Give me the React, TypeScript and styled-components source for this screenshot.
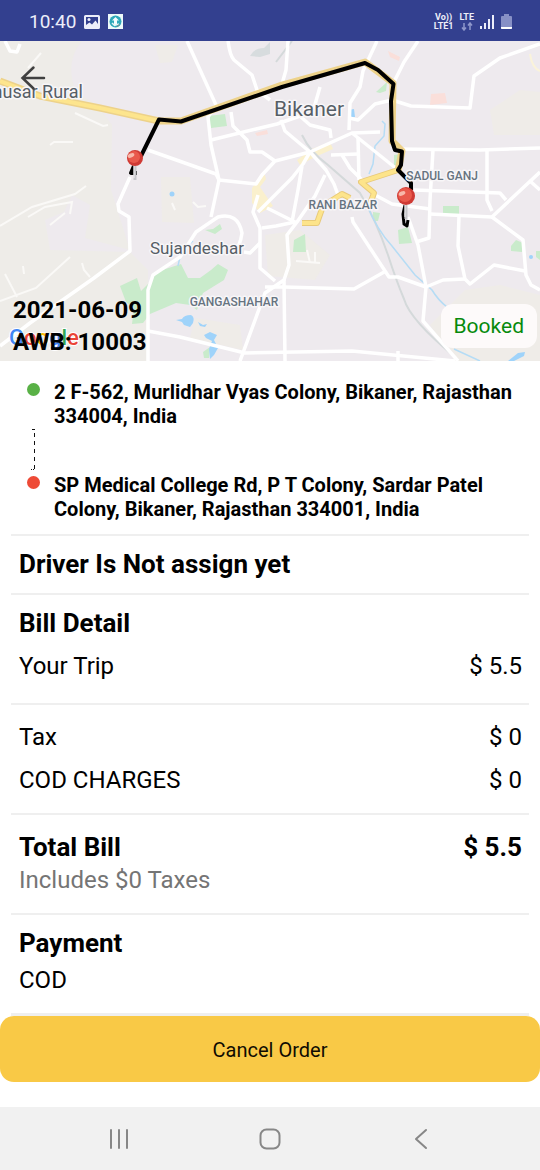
import React from "react";
import styled, { createGlobalStyle } from "styled-components";

const GlobalStyle = createGlobalStyle`
  *, *::before, *::after { box-sizing: border-box; }
  body {
    margin: 0;
    background: #fff;
    color: #000;
    font-family: Roboto, "Liberation Sans", sans-serif;
  }
  h1, h2, p, dl, dt, dd, ol { margin: 0; padding: 0; }
`;

const Screen = styled.div`
  display: flex;
  flex-direction: column;
  min-height: 100vh;
`;

const StatusBar = styled.header`
  display: flex;
  align-items: center;
  justify-content: space-between;
  height: 41px;
  padding: 2px 28px 0 29px;
  background: #33408f;
  color: #eceefa;
`;

const StatusGroup = styled.div<{ $gap: number }>`
  display: flex;
  align-items: center;
  gap: ${(p) => p.$gap}px;
`;

const Clock = styled.time`
  font-size: 19px;
  line-height: 24px;
`;

const NetworkLabel = styled.span`
  display: flex;
  flex-direction: column;
  align-items: center;
  font-size: 9px;
  font-weight: 700;
  line-height: 9px;
`;

const MapArea = styled.section`
  position: relative;
  height: 320px;
  overflow: hidden;
  background: #eeeaee;
`;

const MapCanvas = styled.svg`
  display: block;
  width: 100%;
  height: 100%;
`;

const BackButton = styled.button`
  position: absolute;
  top: 24px;
  left: 20px;
  display: flex;
  padding: 0;
  border: 0;
  background: none;
  color: #404040;
`;

const OrderInfo = styled.div`
  position: absolute;
  left: 13px;
  bottom: 3px;
  font-size: 24px;
  font-weight: 700;
  line-height: 32px;
`;

const StatusChip = styled.span`
  position: absolute;
  right: 3px;
  bottom: 13px;
  padding: 10px 13px;
  border-radius: 12px;
  background: #fdfafa;
  color: #078a0c;
  font-size: 21px;
  line-height: 24px;
`;

const Route = styled.ol`
  display: flex;
  flex-direction: column;
  padding: 19px 12px 13px 27px;
  list-style: none;
`;

const Stop = styled.li`
  display: flex;
  align-items: flex-start;
  gap: 14px;
  font-size: 20px;
  font-weight: 700;
  line-height: 24px;
`;

const StopDot = styled.span<{ $color: string }>`
  flex: none;
  width: 13px;
  height: 13px;
  margin-top: 3px;
  border-radius: 50%;
  background: ${(p) => p.$color};
`;

const Connector = styled.li`
  width: 13px;
  height: 45px;
  svg { display: block; }
`;

const Section = styled.section<{ $top?: number; $bottom?: number; $last?: boolean }>`
  margin: 0 11px;
  padding: ${(p) => p.$top ?? 12}px 8px ${(p) => p.$bottom ?? 16}px;
  border-top: 2px solid #efefef;
  border-bottom: ${(p) => (p.$last ? "3px solid #efefef" : "0")};
`;

const Title = styled.h2`
  font-size: 26px;
  font-weight: 700;
  line-height: 33px;
`;

const Charges = styled.dl<{ $offset?: number }>`
  display: flex;
  flex-direction: column;
  gap: 10px;
  margin-top: ${(p) => p.$offset ?? 0}px;
`;

const Charge = styled.div<{ $strong?: boolean }>`
  display: flex;
  justify-content: space-between;
  margin-right: -1px;
  font-size: ${(p) => (p.$strong ? 26 : 24)}px;
  font-weight: ${(p) => (p.$strong ? 700 : 400)};
  line-height: 33px;
`;

const Text = styled.p<{ $muted?: boolean; $offset?: number }>`
  margin-top: ${(p) => p.$offset ?? 0}px;
  color: ${(p) => (p.$muted ? "#757575" : "#000")};
  font-size: 24px;
  line-height: 33px;
`;

const CancelButton = styled.button`
  width: 100%;
  height: 66px;
  padding-top: 3px;
  border: 0;
  border-radius: 14px;
  background: #f9c946;
  color: #100c02;
  font-family: inherit;
  font-size: 20px;
`;

const NavBar = styled.nav`
  display: flex;
  align-items: center;
  justify-content: space-around;
  height: 63px;
  margin-top: auto;
  padding: 0 43px;
  background: #f1f1f1;
`;

const NavButton = styled.button`
  display: flex;
  justify-content: center;
  width: 22px;
  padding: 0;
  border: 0;
  background: none;
  color: #878787;
`;

const roads = [
  "M187 41 L216 105 L208 117 L211 145 L219 180 L211 217",
  "M228 41 Q230 56 234 60 L252 75 L257 90 L270 100",
  "M231 112 L233 126 L247 140 L250 152 L262 152 L275 161",
  "M211 140 L256 129 L277 124 L300 116",
  "M148 150 L216 174 L219 180 L256 184 L262 175 L275 161 L310 152 L352 133 L380 132",
  "M281 120 L285 131 L310 152 L326 170 L334 184 L338 195",
  "M301 117 L310 125 L330 130 L331 138",
  "M377 41 L363 71 L360 87 L350 103 L349 130",
  "M418 41 L404 62 L393 84",
  "M288 41 L286 70 L282 84",
  "M320 87 L314 108",
  "M349 118 L358 120 L375 104 L392 100 L411 106 L470 108 L474 76 L500 58 L540 44",
  "M352 133 L398 170",
  "M358 137 L359 180",
  "M395 149 L480 150 L540 148",
  "M331 155 L358 154",
  "M342 155 L350 168 L362 180",
  "M302 166 L298 190 L292 222",
  "M310 152 L303 164 L292 178 L258 212",
  "M325 175 L315 196 L297 222 L287 235 L289 265 L284 280 L265 293 L240 361",
  "M258 195 L253 212 L260 228 L260 268 L275 281",
  "M262 228 L276 226 L295 222 L267 208",
  "M260 243 L250 253 L244 252",
  "M265 287 L284 287 L354 289 L386 271",
  "M284 280 L285 361",
  "M352 217 L353 222 L389 277 L398 277 L426 287",
  "M375 195 L392 204 L430 209",
  "M414 190 L500 193 L506 200",
  "M433 150 L430 200 L429 238 L416 242",
  "M487 150 L487 200 L492 211",
  "M540 172 L525 186 L492 217 L430 214",
  "M530 181 L540 190",
  "M492 217 L523 240 L526 275 L531 285 L540 290",
  "M459 216 L458 246 L465 279 L470 284 L494 265 L525 271",
  "M408 217 L418 245 L426 287 L423 321 L458 361",
  "M426 287 L443 280 L465 279",
  "M130 177 L118 204 L119 211 L129 217 L130 251 L94 278 L30 323 L0 346",
  "M148 361 L148 290 L153 275 L180 257 L196 232 L218 217 Q238 212 242 233 Q240 248 233 253",
  "M148 331 L180 337 L245 353 L352 351 L455 361",
  "M398 351 L398 361",
  "M5 41 L10 51 L17 52 L20 44",
];

const minorRoads = [
  "M0 301 L36 288 L70 257",
  "M0 226 L32 207 L75 194 L86 186",
  "M28 217 L45 207 L72 202 L70 214 M50 225 L65 213",
  "M75 113 L103 126 L108 125 M50 145 L54 142 L73 142",
  "M82 263 L84 270 L90 277 M5 274 L17 297",
  "M296 261 L320 263 M307 250 L310 263 M315 252 L315 263",
  "M172 203 L175 210 M193 202 L198 207 L206 206",
  "M41 53 L28 68 M23 266 L24 274",
];

const driveRoute =
  "M141 156 L159 119.500 L181 121.500 L282 87 L365 63 L378 70 L393.500 84 L391 101 L392 141 L395 150 L402 151.500 L401 165 L398 170 L411 183 L411 190";

const Pin = ({ x, y, size }: { x: number; y: number; size: number }) => (
  <g transform={`translate(${x} ${y})`}>
    <path d={`M0 ${size} V${size + 14}`} stroke="#c6c6ca" strokeWidth="3" />
    <path d={`M-1 ${size} V${size + 12}`} stroke="#eceaec" strokeWidth="1" />
    <circle r={size} fill="#cf3a34" />
    <circle cx="-1" cy="-1" r={size - 2} fill="#e9594c" />
    <ellipse cx="-2.500" cy="-4" rx="3.500" ry="2" fill="#f8b8aa" transform="rotate(-25)" />
  </g>
);

const RouteMap = () => (
  <MapCanvas viewBox="0 41 540 320" preserveAspectRatio="xMidYMid slice" role="img" aria-label="Map of Bikaner">
    <rect y="41" width="540" height="320" fill="#eeeaee" />
    <path
      d="M0 41 H82 Q64 62 76 92 L97 105 L112 125 L111 190 L130 250 L85 238 L90 205 L72 195 L64 212 L45 220 L50 250 L130 252 L148 270 V361 H0 Z"
      fill="#eeece8"
    />
    <g fill="#efece8">
      <path d="M161 177 L190 177 L194 223 L162 222 Z" />
      <path d="M265 235 L300 230 L330 255 L315 280 L268 276 Z" />
      <path d="M465 290 L500 285 L540 295 V361 H455 L430 325 Z" />
      <path d="M155 45 H178 L172 62 L160 63 Z" />
      <path d="M490 110 L520 90 L540 92 V135 H494 Z" />
      <path d="M195 318 L240 325 L243 350 L190 338 Z" />
    </g>
    <g fill="#c9ebcb">
      <path d="M120 286 L137 278 L141 291 L150 282 L153 273 L181 264 L188 278 L200 278 L211 270 L218 264 L228 270 L224 280 L203 293 L197 310 L190 305 L176 303 L150 314 L143 323 L132 324 L134 308 L126 302 Z" />
      <path d="M208 116 L225 114 L227 126 L211 128 Z" />
      <path d="M205 230 L213 229 L220 224 L222 229 L215 234 Z" />
      <path d="M376 92 L387 82 L386 91 L380 93 Z" />
      <path d="M294 240 L305 234 L306 252 L293 252 Z" />
      <path d="M398 230 L408 227 L412 243 L399 244 Z" />
      <path d="M443 206 H459 V214 H443 Z" />
      <path d="M373 212 L380 213 L378 221 L373 221 Z" />
      <path d="M511 246 L516 240 L523 243 L522 252 L511 251 Z" />
      <path d="M536 251 H540 V260 L536 257 Z M394 155 L400 154 L399 165 L394 165 Z M203 352 L210 347 L209 358 L204 358 Z" />
    </g>
    <g fill="#fadfda">
      <path d="M431 94 L445 93 L447 103 L430 105 Z" />
      <path d="M388 51 L400 57 L399 61 L390 57 Z" />
      <path d="M255 133 L267 130 L268 134 L257 136 Z" />
    </g>
    <g fill="#faf0cd">
      <path d="M252 188 L264 172 L266 179 L260 187 L273 206 L260 213 L252 203 Z" />
      <path d="M297 160 L312 149 L330 142 L333 149 L315 157 L300 165 Z" />
    </g>
    <g fill="#9fd3fa">
      <path d="M348 110 L354 109 L355 117 L349 118 Z" />
      <circle cx="172" cy="194" r="2.500" />
      <circle cx="531" cy="257" r="2" />
      <path d="M182 319 Q184 315 191 315 Q195 317 193 323 L190 327 L184 325 L182 322 L176 320 Z" />
      <path d="M198 322 L203 325 L207 324 L205 327 L200 326 Z" />
      <path d="M204 335 L210 332 L217 335 L214 340 L218 348 L214 355 L210 359 L209 349 L212 341 L206 338 Z" />
      <path d="M508 361 L518 353 L525 352 L524 356 L514 361 Z" />
    </g>
    <g fill="#d7dcde">
      <path d="M250 56 Q254 48 264 48 L270 42 V54 L260 57 Z" />
    </g>
    <path d="M292 41 L276 62 M302 135 Q310 152 328 165 L360 193 Q376 220 388 255 Q396 280 404 299 Q410 320 455 357" fill="none" stroke="#d4d9da" strokeWidth="2" />
    <g fill="none" stroke="#b5dcf5" strokeWidth="1.500">
      <path d="M382 121 L385 124 L384 136 L375 146 L373 164 L369 174" />
      <path d="M367 205 Q377 230 392 246 L415 275 L432 290 Q438 300 447 307 M454 349 L480 361" />
      <path d="M193 241 L181 252 L178 266" />
    </g>
    <g fill="none" stroke="#fff" strokeWidth="3.500" strokeLinejoin="round">
      {roads.map((d) => (
        <path key={d} d={d} />
      ))}
    </g>
    <g fill="none" stroke="#faf9f7" strokeWidth="2">
      {minorRoads.map((d) => (
        <path key={d} d={d} />
      ))}
    </g>
    <path d="M530 54 Q532 68 540 71" fill="none" stroke="#faf3da" strokeWidth="2" />
    <g fill="none" strokeLinejoin="round">
      <path d="M0 81 L40 96 L100 108 L159 121 L181 121 L282 85 L365 62 L393 83 L392 141 L402 151 L398 171" stroke="#edd28a" strokeWidth="7" />
      <path d="M0 81 L40 96 L100 108 L159 121" stroke="#fde58d" strokeWidth="4" />
      <path d="M398 170 L361 182 L374 193 L370 204" stroke="#e8ca7a" strokeWidth="6" />
      <path d="M398 170 L361 182 L374 193 L370 204" stroke="#fde48b" strokeWidth="4" />
      <path d="M302 223 L317 223 L323 206 L342 194 L350 198" stroke="#e8ca7a" strokeWidth="6" />
      <path d="M302 223 L317 223 L323 206 L342 194 L350 198" stroke="#fde48b" strokeWidth="4" />
      <path d={driveRoute} stroke="#000" strokeWidth="4" />
      <path d="M134 166 L131 173 L137 173" stroke="#000" strokeWidth="4" />
      <path d="M405 205 L403 214 L404 224 L407 226 L408 220" stroke="#000" strokeWidth="3" />
    </g>
    <g fill="#565e66" stroke="#f8f6f8" strokeWidth="3" strokeLinejoin="round" paintOrder="stroke" fontFamily="Roboto, sans-serif">
      <text x="83" y="98" fontSize="18" textAnchor="end">nusar Rural</text>
      <text x="274" y="116" fontSize="21">Bikaner</text>
      <text x="150" y="254" fontSize="17">Sujandeshar</text>
      <g fontSize="12" fontWeight="500" fill="#667380" textAnchor="middle">
        <text x="442" y="180">SADUL GANJ</text>
        <text x="343" y="209">RANI BAZAR</text>
        <text x="234" y="306">GANGASHAHAR</text>
      </g>
    </g>
    <Pin x={135} y={158} size={8} />
    <Pin x={406} y={196} size={9} />
    <text x="9" y="345" fontSize="22" fontWeight="500" fontFamily="Roboto, sans-serif" stroke="#fff" strokeWidth="2" paintOrder="stroke">
      <tspan fill="#4285f4">G</tspan>
      <tspan fill="#ea4335">o</tspan>
      <tspan fill="#fbbc05">o</tspan>
      <tspan fill="#4285f4">g</tspan>
      <tspan fill="#34a853">l</tspan>
      <tspan fill="#ea4335">e</tspan>
    </text>
  </MapCanvas>
);

const PictureIcon = () => (
  <svg width="16" height="16" viewBox="0 0 16 16" aria-hidden="true">
    <path fillRule="evenodd" fill="#eceefa" d="M1.500 1 H14.500 Q16 1 16 2.500 V13.500 Q16 15 14.500 15 H1.500 Q0 15 0 13.500 V2.500 Q0 1 1.500 1 Z M2 3 V11 L5.500 8.500 L8 10.500 L11.500 6.500 L14 10 V3 Z" />
    <circle cx="5" cy="5.500" r="1.500" fill="#eceefa" />
  </svg>
);

const AppIcon = () => (
  <svg width="15" height="15" viewBox="0 0 15 15" aria-hidden="true">
    <rect width="15" height="15" fill="#eefafa" />
    <circle cx="7.500" cy="7.500" r="6" fill="#2fa9ba" />
    <path d="M7.500 3 L11 6.500 H9 V11 H6 V6.500 H4 Z" fill="#f4fcfc" />
    <path d="M4 9 L6.500 11.500 L11 10" stroke="#e4f4f5" strokeWidth="1.500" fill="none" />
    <path d="M9 12.500 L11.500 10.500" stroke="#6b8f96" strokeWidth="1.500" />
  </svg>
);

const DataArrows = () => (
  <svg width="12" height="9" viewBox="0 0 12 9" fill="none" stroke="#8f98cc" strokeWidth="1.500" aria-hidden="true">
    <path d="M3 1 V8 M1 5.500 L3 8 L5 5.500 M9 8 V1 M7 3.500 L9 1 L11 3.500" />
  </svg>
);

const SignalIcon = () => (
  <svg width="15" height="16" viewBox="0 0 15 16" fill="#eceefa" aria-hidden="true">
    <path d="M0 12 H2 V15 H0 Z M4 9 H6 V15 H4 Z M8 5 H10 V15 H8 Z M12 1 H14 V15 H12 Z" />
  </svg>
);

const BatteryIcon = () => (
  <svg width="11" height="17" viewBox="0 0 11 17" aria-hidden="true">
    <path d="M3 1 H8 V3 H10 Q11 3 11 4 V16 H0 V4 Q0 3 1 3 H3 Z" fill="#8790c6" />
    <path d="M0 14 H11 V15 Q11 16 10 16 H1 Q0 16 0 15 Z" fill="#fff" />
  </svg>
);

const ArrowLeft = () => (
  <svg width="26" height="26" viewBox="0 0 26 26" fill="none" stroke="currentColor" strokeWidth="2.500" strokeLinecap="round" aria-hidden="true">
    <path d="M13.500 2.500 L2.500 13 L13.500 23.500 M3 13 H24" />
  </svg>
);

export default function App() {
  return (
    <Screen>
      <GlobalStyle />
      <StatusBar>
        <StatusGroup $gap={8}>
          <Clock>10:40</Clock>
          <PictureIcon />
          <AppIcon />
        </StatusGroup>
        <StatusGroup $gap={6}>
          <NetworkLabel>
            <span>Vo))</span>
            <span>LTE1</span>
          </NetworkLabel>
          <NetworkLabel>
            <span>LTE</span>
            <DataArrows />
          </NetworkLabel>
          <SignalIcon />
          <BatteryIcon />
        </StatusGroup>
      </StatusBar>

      <MapArea>
        <RouteMap />
        <BackButton aria-label="Back">
          <ArrowLeft />
        </BackButton>
        <OrderInfo>
          <p>2021-06-09</p>
          <p>AWB: 10003</p>
        </OrderInfo>
        <StatusChip>Booked</StatusChip>
      </MapArea>

      <main>
        <Route>
          <Stop>
            <StopDot $color="#59b146" />
            <span>2 F-562, Murlidhar Vyas Colony, Bikaner, Rajasthan 334004, India</span>
          </Stop>
          <Connector aria-hidden="true">
            <svg width="13" height="45" viewBox="0 0 13 45" fill="none" stroke="#111">
              <path d="M5 1.500 H8" />
              <path d="M7.500 5 V41" strokeDasharray="4 4" />
              <path d="M4 41.500 H8" strokeDasharray="1 1" />
            </svg>
          </Connector>
          <Stop>
            <StopDot $color="#ee4a36" />
            <span>SP Medical College Rd, P T Colony, Sardar Patel Colony, Bikaner, Rajasthan 334001, India</span>
          </Stop>
        </Route>

        <Section $bottom={12}>
          <Title>Driver Is Not assign yet</Title>
        </Section>

        <Section $bottom={20}>
          <Title>Bill Detail</Title>
          <Charges $offset={10}>
            <Charge>
              <dt>Your Trip</dt>
              <dd>$ 5.5</dd>
            </Charge>
          </Charges>
        </Section>

        <Section $top={16}>
          <Charges>
            <Charge>
              <dt>Tax</dt>
              <dd>$ 0</dd>
            </Charge>
            <Charge>
              <dt>COD CHARGES</dt>
              <dd>$ 0</dd>
            </Charge>
          </Charges>
        </Section>

        <Section $top={16}>
          <Charges>
            <Charge $strong>
              <dt>Total Bill</dt>
              <dd>$ 5.5</dd>
            </Charge>
          </Charges>
          <Text $muted>Includes $0 Taxes</Text>
        </Section>

        <Section $last>
          <Title>Payment</Title>
          <Text $offset={4}>COD</Text>
        </Section>

        <CancelButton>Cancel Order</CancelButton>
      </main>

      <NavBar aria-label="System">
        <NavButton aria-label="Recent apps">
          <svg width="20" height="22" viewBox="0 0 20 22" stroke="currentColor" strokeWidth="2" strokeLinecap="round">
            <path d="M2 2 V20 M10 2 V20 M18 2 V20" />
          </svg>
        </NavButton>
        <NavButton aria-label="Home">
          <svg width="22" height="22" viewBox="0 0 22 22" fill="none" stroke="currentColor" strokeWidth="2">
            <rect x="1.500" y="1.500" width="19" height="19" rx="6" />
          </svg>
        </NavButton>
        <NavButton aria-label="Back">
          <svg width="14" height="22" viewBox="0 0 14 22" fill="none" stroke="currentColor" strokeWidth="2" strokeLinecap="round" strokeLinejoin="round">
            <path d="M12 2 L2 11 L12 20" />
          </svg>
        </NavButton>
      </NavBar>
    </Screen>
  );
}
